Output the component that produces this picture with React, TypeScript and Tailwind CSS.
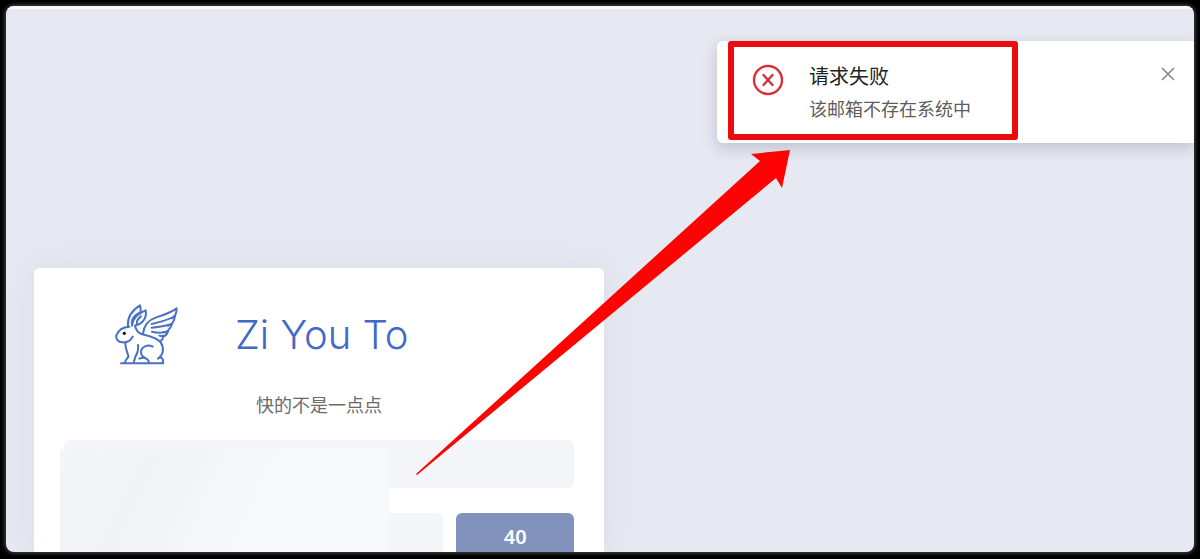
import { useState } from "react";

const RabbitLogo = () => (
  <svg
    viewBox="45 40 192 192"
    className="size-16 shrink-0"
    fill="none"
    stroke="#4a70c4"
    strokeWidth="6"
    strokeLinecap="round"
    strokeLinejoin="round"
    aria-hidden="true"
  >
    {/* ears */}
    <path d="M84 108C82 84 96 62 120 47C123 56 123 64 120 72" />
    <path d="M96 108C97 88 112 72 137 62C141 82 130 102 107 107" />
    <path d="M95 98C97 84 106 76 118 70M111 104C108 92 115 86 123 80" />
    {/* head */}
    <path d="M88 111C70 112 55 121 49 137C47 149 55 157 67 158C80 159 92 152 98 141" />
    <circle cx="73" cy="131" r="5" fill="#111827" stroke="none" />
    {/* body and paws */}
    <path d="M105 108C108 122 115 130 127 134C148 139 170 143 182 158C193 174 191 195 174 207" />
    <path d="M76 160C75 178 84 188 85 201C81 208 76 211 75 219" />
    <path d="M114 166C116 183 112 192 106 201L101 219M158 171C142 163 124 171 123 187C123 195 127 201 135 204" />
    <path d="M118 207C132 201 145 207 147 219M180 202C190 206 191 214 187 220" />
    <path d="M63 221H190" />
    {/* wing */}
    <path d="M129 132C132 105 144 91 169 83C194 75 214 68 230 56C230 71 225 81 216 86" />
    <path d="M155 103C178 97 207 91 225 79C223 96 216 105 204 108" />
    <path d="M155 114C178 113 198 108 216 103C210 120 202 128 189 128" />
    <path d="M156 126C174 131 190 130 204 125C200 138 191 142 178 138M188 138C190 146 187 151 181 154" />
  </svg>
);

const ErrorIcon = () => (
  <svg
    viewBox="0 0 32 32"
    className="size-8 shrink-0"
    fill="none"
    stroke="#d9303a"
    strokeWidth="2.4"
    strokeLinecap="round"
    aria-hidden="true"
  >
    <circle cx="16" cy="16" r="14" />
    <path d="M11.5 11L20.5 21M20.5 11L11.5 21" />
  </svg>
);

const Notification = ({ onClose }: { onClose: () => void }) => (
  <div
    role="alert"
    className="absolute top-[35px] right-0 flex w-[477px] items-start rounded-l-md bg-white pt-[21px] pr-[18px] pb-[21px] pl-[35px] shadow-[0_5px_16px_rgba(30,30,50,0.2)]"
  >
    <div className="mt-[2px] mr-[25px]">
      <ErrorIcon />
    </div>
    <div className="flex-1">
      <p className="text-[20px] leading-7 text-[#222222]">请求失败</p>
      <p className="mt-1 text-[18px] leading-7 text-[#5c5c5c]">
        该邮箱不存在系统中
      </p>
    </div>
    <button type="button" aria-label="关闭" onClick={onClose} className="mt-1">
      <svg
        viewBox="0 0 16 16"
        className="size-4"
        stroke="#858585"
        strokeWidth="1.5"
        aria-hidden="true"
      >
        <path d="M2 2L14 14M14 2L2 14" />
      </svg>
    </button>
    <div className="pointer-events-none absolute top-0 left-[11px] h-[99px] w-[290px] rounded-[3px] border-[6px] border-[#ee0b10]" />
  </div>
);

const LoginCard = () => (
  <div className="relative mt-[262px] ml-7 w-[48%] rounded-t-md bg-white px-[30px] pt-[35px] shadow-[0_0_36px_rgba(60,70,90,0.07)]">
    <div className="flex items-center gap-14 pl-[51px]">
      <RabbitLogo />
      <h1 className="font-[Inter] text-[40px] leading-[56px] font-light whitespace-nowrap text-[#4169c8]">
        Zi You To
      </h1>
    </div>
    <p className="mt-[23px] text-center text-[18px] leading-7 text-[#6b6b6b]">
      快的不是一点点
    </p>
    <form className="mt-[22px]" onSubmit={(e) => e.preventDefault()}>
      <input
        type="email"
        aria-label="邮箱"
        className="block h-12 w-full rounded-md bg-[#f4f5f9] px-4"
      />
      <div className="mt-[25px] flex gap-[13px]">
        <input
          type="text"
          aria-label="验证码"
          className="h-12 min-w-0 flex-1 rounded-md bg-[#f4f5f9] px-4"
        />
        <button
          type="button"
          disabled
          className="h-12 w-[118px] rounded-md bg-[#8192bd] font-['Noto_Sans'] text-[20px] font-semibold text-white"
        >
          40
        </button>
      </div>
    </form>
    <div className="pointer-events-none absolute top-[181px] left-[26px] h-[110px] w-[329px] bg-[linear-gradient(115deg,#f4f5f9,#f1f2f5_25%,#f8f9fd_65%)]" />
  </div>
);

export default function App() {
  const [open, setOpen] = useState(true);

  return (
    <div className="h-screen bg-black px-[6px] pt-[6px] pb-[7px] font-['Noto_Sans_CJK_SC',sans-serif]">
      <main className="relative h-full overflow-hidden rounded-lg bg-[#e6e9f2] shadow-[0_0_4px_1px_#4b4d4d]">
        <div className="absolute inset-x-0 top-0 h-[3px] bg-[#f8f8fb]" />
        <div className="flow-root">
          <LoginCard />
        </div>
        {open && <Notification onClose={() => setOpen(false)} />}
        <svg
          viewBox="0 0 376 326"
          className="pointer-events-none absolute top-[144px] left-[409px] h-[326px] w-[376px]"
          aria-hidden="true"
        >
          <path
            d="M1 324L345 11L336 4L375 0L367 38L361 28L2 325Z"
            fill="#fd0303"
          />
        </svg>
      </main>
    </div>
  );
}
